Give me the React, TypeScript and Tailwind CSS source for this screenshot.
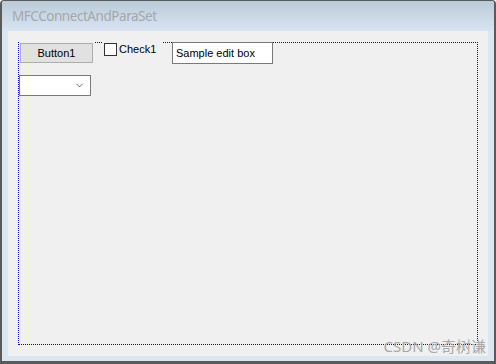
import { ChevronDown } from 'lucide-react';

const ui = { fontFamily: '"Liberation Sans", Arial, sans-serif' };

export default function App() {
  return (
    <div className="w-[496px] h-[364px] bg-white">
      <div className="relative flex h-full flex-col overflow-hidden rounded-t-[4px] border-x-2 border-t border-b-[3px] border-[#5a5a5a] bg-[#dbe6f3]">
        {/* title bar */}
        <div className="flex h-[30px] shrink-0 items-center bg-gradient-to-b from-[#bccbd9] to-[#d8e4f1] pl-[10px]">
          <span
            className="text-[13.5px] tracking-[-0.45px] text-[#a3a8ad]"
            style={{ fontFamily: '"Noto Sans", "Open Sans", sans-serif' }}
          >
            MFCConnectAndParaSet
          </span>
        </div>

        {/* client area */}
        <div className="mx-[6px] mb-[5px] flex-1 bg-[#f0f0f0] pt-[11px] pl-[10px]">
          <div className="h-[303px] w-[460px] border border-dotted border-[#0000ff]">
            <div className="-mt-px flex items-start" style={ui}>
              <div className="w-[76px] bg-[#f0f0f0] pt-px pl-px">
                <button className="flex h-[20px] w-[73px] items-center justify-center border border-[#adadad] bg-[#e1e1e1] text-[11px] text-black">
                  Button1
                </button>
              </div>
              <div className="ml-[8px] flex h-[16px] w-[60px] items-start bg-[#f0f0f0] pt-px pl-px">
                <span className="h-[13px] w-[13px] border border-[#333333] bg-white" />
                <span className="ml-[2px] text-[11px] leading-[13px] text-black">Check1</span>
              </div>
              <div className="ml-[9px] flex h-[22px] w-[101px] items-center border border-[#7a7a7a] bg-white pl-[3px] text-[11px] text-black">
                Sample edit box
              </div>
            </div>
            <div className="mt-[11px] flex h-[21px] w-[72px] items-center justify-end border border-[#7a7a7a] bg-white pr-[5px]">
              <ChevronDown className="h-[11px] w-[11px] text-[#333]" strokeWidth={1.6} />
            </div>
          </div>
        </div>

        {/* watermark */}
        <span
          className="absolute right-[8px] bottom-[4px] text-[15px] text-[#a8a8a8]"
          style={{ fontFamily: '"Noto Sans", "Noto Sans CJK SC", sans-serif' }}
        >
          CSDN @奇树谦
        </span>
      </div>
    </div>
  );
}
